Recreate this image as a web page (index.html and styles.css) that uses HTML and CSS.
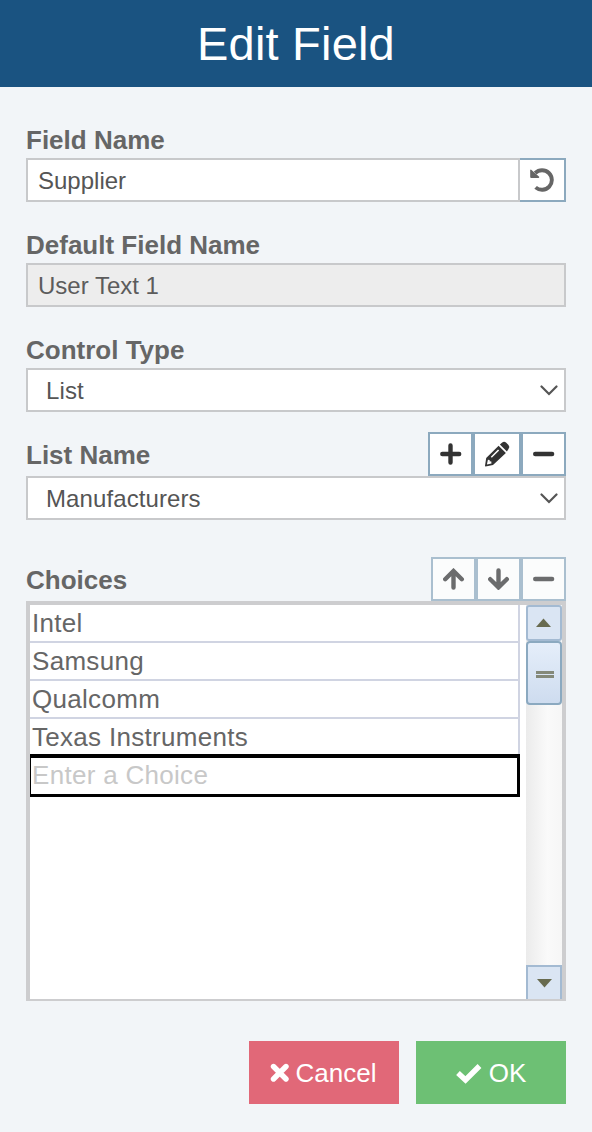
FILE: index.html
```html
<!DOCTYPE html>
<html lang="en">
<head>
    <meta charset="UTF-8">
    <meta name="viewport" content="width=device-width, initial-scale=1.0">
    <title>Edit Field</title>
    <link rel="stylesheet" href="styles.css">
</head>
<body>
    <header class="dialog-header">
        <h1>Edit Field</h1>
    </header>
    <form class="dialog-body">
        <div class="field">
            <label for="field-name">Field Name</label>
            <div class="input-group">
                <input type="text" id="field-name" value="Supplier">
                <button type="button" class="undo-button" aria-label="Reset">
                    <svg width="24" height="24" viewBox="0 0 24 24">
                        <path d="M5.2 5A9.800 9.800 0 1 1 5.600 19.400" fill="none" stroke="#666" stroke-width="3.900"/>
                        <path d="M.2 2.200Q.4 1.300 1.200 1.800L9.200 8.800Q9.500 9.900 8.600 10H1.200Q.2 10 .2 9z" fill="#666"/>
                    </svg>
                </button>
            </div>
        </div>

        <div class="field">
            <label for="default-name">Default Field Name</label>
            <input type="text" id="default-name" value="User Text 1" disabled>
        </div>

        <div class="field">
            <label for="control-type">Control Type</label>
            <div class="select">
                <select id="control-type"><option>List</option></select>
                <svg class="chevron" width="18" height="12" viewBox="0 0 18 12"><path d="M1.500 1.500 9 9l7.500-7.500"/></svg>
            </div>
        </div>

        <div class="field-list">
            <div class="label-row">
                <label for="list-name">List Name</label>
                <div class="toolbar">
                    <button type="button" aria-label="Add">
                        <svg width="22" height="22" viewBox="0 0 22 22"><path d="M10.500 2.500v17M2.300 11h16.900" class="line"/></svg>
                    </button>
                    <button type="button" class="wide" aria-label="Edit">
                        <svg width="26" height="26" viewBox="0 0 26 26">
                            <path fill="#333" fill-rule="evenodd" d="M14.600 4.700 21.900 11.900 9 24 1.600 25.400Q.9 25.400 1 24.800L2.200 17zM3.900 18.800 2.900 23.500 7.500 22.500 7.200 20.300 5.800 20.400 5.600 18.900zM14 8.600 6.800 15.800 7.800 16.800 15.200 9.600z"/>
                            <path fill="#333" d="M15.900 3.600 17.900 1.700Q20 0 22 1.500L24.500 4Q26 6 24.500 8L22.900 10.500z"/>
                        </svg>
                    </button>
                    <button type="button" aria-label="Remove">
                        <svg width="22" height="22" viewBox="0 0 22 22"><path d="M2.200 11h16.900" class="line"/></svg>
                    </button>
                </div>
            </div>
            <div class="select">
                <select id="list-name"><option>Manufacturers</option></select>
                <svg class="chevron" width="18" height="12" viewBox="0 0 18 12"><path d="M1.500 1.500 9 9l7.500-7.500"/></svg>
            </div>
        </div>

        <div class="field-choices">
            <div class="label-row">
                <label>Choices</label>
                <div class="toolbar inactive">
                    <button type="button" aria-label="Move up">
                        <svg width="22" height="22" viewBox="0 0 22 22"><path d="M10.500 19.500V3.500M2.200 11.200 10.500 3l8.300 8.200" class="line"/></svg>
                    </button>
                    <button type="button" aria-label="Move down">
                        <svg width="22" height="22" viewBox="0 0 22 22"><path d="M10.500 2.500v16M2.200 11.200l8.300 8.200 8.300-8.200" class="line"/></svg>
                    </button>
                    <button type="button" aria-label="Remove choice">
                        <svg width="22" height="22" viewBox="0 0 22 22"><path d="M2.200 11h16.900" class="line"/></svg>
                    </button>
                </div>
            </div>
            <div class="choices-box">
                <div class="choices">
                    <div class="choice">Intel</div>
                    <div class="choice">Samsung</div>
                    <div class="choice">Qualcomm</div>
                    <div class="choice">Texas Instruments</div>
                    <div class="choice new-choice">Enter a Choice</div>
                </div>
                <div class="scrollbar">
                    <div class="scroll-button"><svg width="16" height="10" viewBox="0 0 16 10"><path d="M7.500.5 15 9H0z"/></svg></div>
                    <div class="scroll-thumb"><span></span><span></span></div>
                    <div class="scroll-button down"><svg width="16" height="10" viewBox="0 0 16 10"><path d="M8.500 9.500 16 1H1z"/></svg></div>
                </div>
            </div>
        </div>

        <div class="actions">
            <button type="button" class="cancel">
                <svg width="20" height="20" viewBox="0 0 20 20"><path d="m3.500 3.500 12.500 12.500M16 3.500 3.500 16" fill="none" stroke="#fff" stroke-width="5.400" stroke-linecap="round"/></svg>
                <span>Cancel</span>
            </button>
            <button type="button" class="ok">
                <svg width="28" height="22" viewBox="0 0 28 22"><path d="m3 11 7.500 7L24.500 4" fill="none" stroke="#fff" stroke-width="5.400"/></svg>
                <span>OK</span>
            </button>
        </div>
    </form>
</body>
</html>
```
FILE: styles.css
```css
* {
    box-sizing: border-box;
}

body {
    margin: 0;
    background: #f2f5f8;
    color: #666;
    font-family: "Liberation Sans", Arial, sans-serif;
    font-size: 26px;
}

button,
input,
select {
    margin: 0;
    padding: 0;
    border-radius: 0;
    font-family: inherit;
}

svg {
    display: block;
    flex: none;
}

.dialog-header {
    height: 87px;
    background: #1a5381;
    color: #fff;
    text-align: center;
}

.dialog-header h1 {
    margin: 0;
    font-size: 47px;
    font-weight: normal;
    line-height: 87px;
    letter-spacing: 0.2px;
}

.dialog-body {
    padding: 37px 26px 28px;
}

label {
    display: block;
    font-weight: bold;
    line-height: 32px;
}

.field {
    margin-bottom: 27px;
}

.field label {
    margin-bottom: 2px;
}

input,
select {
    display: block;
    width: 100%;
    height: 44px;
    padding: 2px 10px 0;
    border: 2px solid #c8c9cb;
    background: #fff;
    color: #555;
    font-size: 24px;
}

input:disabled {
    background: #ededed;
    color: #5c5c5c;
}

.input-group {
    display: flex;
}

.undo-button {
    display: flex;
    align-items: center;
    justify-content: center;
    width: 46px;
    height: 44px;
    flex: none;
    border: 2px solid #8ca9be;
    border-left: 0;
    background: #fff;
}

.select {
    position: relative;
}

.select select {
    padding: 0 18px;
    appearance: none;
    letter-spacing: 0.1px;
}

.chevron {
    position: absolute;
    top: 17px;
    right: 8px;
    fill: none;
    stroke: #555;
    stroke-width: 2.2;
    stroke-linecap: round;
}

.field-list {
    margin-top: -7px;
}

.label-row {
    display: flex;
    align-items: center;
    justify-content: space-between;
    height: 44px;
}

.label-row label {
    padding-top: 1px;
}

.toolbar {
    display: flex;
}

.toolbar button {
    display: flex;
    align-items: center;
    justify-content: center;
    width: 45px;
    height: 44px;
    border: 2px solid #8ca9be;
    background: #fff;
}

.toolbar .wide {
    width: 48px;
}

.toolbar.inactive {
    opacity: 0.7;
}

.line {
    fill: none;
    stroke: #333;
    stroke-width: 4.4;
    stroke-linecap: round;
}

.field-choices {
    margin-top: 37px;
}

.choices-box {
    display: flex;
    justify-content: space-between;
    height: 400px;
    border: 4px solid #cdcdcf;
    border-bottom-width: 2px;
    background: #fff;
    overflow: hidden;
}

.choices {
    width: 490px;
}

.choice {
    height: 38px;
    padding-left: 2px;
    border-right: 2px solid #d0d4e2;
    border-bottom: 2px solid #d0d4e2;
    line-height: 36px;
    letter-spacing: 0.3px;
}

.new-choice {
    position: relative;
    color: #c8c8c8;
    border-color: transparent;
}

/* focus ring of the entry cell */
.new-choice::after {
    content: '';
    position: absolute;
    top: -3px;
    right: -2px;
    bottom: -4px;
    left: 0;
    border: solid #000;
    border-width: 4px 3px 3px 1px;
}

.scrollbar {
    display: flex;
    flex-direction: column;
    width: 36px;
    background: linear-gradient(to right, #ebebeb, #fafafa 60%, #f6f6f6);
}

.scroll-button {
    display: flex;
    align-items: center;
    justify-content: center;
    height: 36px;
    flex: none;
    border: 2px solid #a3bad2;
    border-radius: 3px;
    background: #dae5f3;
}

.scroll-button svg {
    fill: #686b4f;
}

.scroll-button.down {
    height: 34px;
    margin-top: auto;
    border-bottom: 0;
    border-radius: 0;
}

.scroll-thumb {
    display: flex;
    flex-direction: column;
    align-items: center;
    justify-content: center;
    gap: 1px;
    height: 64px;
    flex: none;
    padding: 2px 0 0 2px;
    border: 2px solid #8ba9c0;
    border-radius: 4px;
    background: linear-gradient(#e5eefa, #cedcef);
}

.scroll-thumb span {
    width: 18px;
    height: 3px;
    background: #848979;
}

.actions {
    display: flex;
    justify-content: flex-end;
    gap: 17px;
    margin-top: 40px;
}

.actions button {
    display: flex;
    align-items: center;
    justify-content: center;
    gap: 6px;
    width: 150px;
    height: 63px;
    border: 0;
    color: #fff;
    font-size: 26px;
}

.actions span {
    padding-top: 2px;
}

.actions .cancel {
    padding-right: 2px;
    background: #e16878;
}

.actions .ok {
    padding-right: 1px;
    background: #6dc074;
}
```
